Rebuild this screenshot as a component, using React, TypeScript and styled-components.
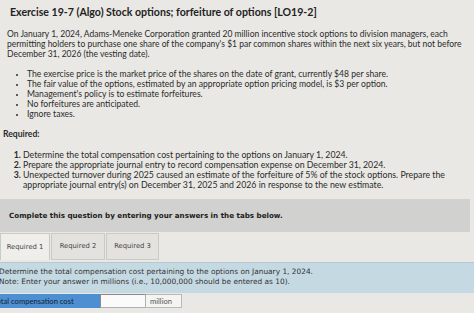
import styled, { createGlobalStyle } from "styled-components";

const GlobalStyle = createGlobalStyle`
  html, body {
    margin: 0;
    padding: 0;
    background: #e9e8e4;
    overflow: hidden;
  }
`;

const Page = styled.div`
  width: 474px;
  height: 313px;
  overflow: hidden;
  font-family: Lato, "Open Sans", sans-serif;
  color: #2b2b2b;
`;

const Article = styled.div`
  padding: 5px 10px 0 7px;
`;

const Title = styled.h1`
  margin: 0 0 0 3px;
  font-size: 10.6px;
  line-height: 14px;
  font-weight: 700;
  color: #222;
`;

const Para = styled.p`
  margin: 10px 0 0;
  font-size: 8.5px;
  line-height: 10px;
  white-space: nowrap;
`;

const Bullets = styled.ul`
  margin: 11px 0 0;
  padding-left: 20px;
  font-size: 8.6px;
  line-height: 9.9px;
  list-style: disc;
  white-space: nowrap;
  li::marker {
    font-size: 7px;
  }
`;

const ReqHead = styled.div`
  margin: 9px 0 0 -4px;
  font-size: 8.6px;
  line-height: 11px;
  font-weight: 700;
`;

const Steps = styled.ol`
  margin: 10px 0 0;
  padding-left: 16px;
  font-size: 8.75px;
  line-height: 10px;
  white-space: nowrap;
  li::marker {
    font-weight: 700;
  }
`;

const Banner = styled.div`
  margin-top: 9px;
  width: 470px;
  height: 33px;
  background: #d1d1cf;
  display: flex;
  align-items: center;
  padding-left: 9px;
  box-sizing: border-box;
  font-family: "DejaVu Sans", Verdana, sans-serif;
  font-weight: 700;
  font-size: 7.15px;
  color: #222;
`;

const TabRow = styled.div`
  display: flex;
  margin-top: 1px;
  height: 27px;
  font-family: "DejaVu Sans", Verdana, sans-serif;
`;

const Tab = styled.div<{ $active?: boolean; $w: number }>`
  width: ${(p) => p.$w}px;
  box-sizing: border-box;
  display: flex;
  align-items: center;
  justify-content: center;
  font-size: 6.8px;
  color: #444;
  background: ${(p) => (p.$active ? "#efeeeb" : "#e3e2df")};
  border: 1px solid #c9c9c6;
  border-bottom: ${(p) => (p.$active ? "none" : "1px solid #c9c9c6")};
  margin-right: 1px;
`;

const InfoBand = styled.div`
  margin-top: 2px;
  height: 31px;
  background: #c5d9e3;
  border-top: 1px solid #b5c9d3;
  box-sizing: border-box;
  padding: 4px 0 0 0;
  font-family: "DejaVu Sans", Verdana, sans-serif;
  font-size: 7.4px;
  line-height: 10px;
  color: #333;
  margin-left: -1px;
  white-space: nowrap;
`;

const AnswerRow = styled.div`
  display: flex;
  height: 14px;
  margin-top: 1px;
  font-family: Lato, "Open Sans", sans-serif;
  font-size: 7.6px;
`;

const Label = styled.div`
  width: 107px;
  margin-left: -7px;
  box-sizing: border-box;
  background: #4d8fd0;
  color: #10243a;
  display: flex;
  align-items: center;
  white-space: nowrap;
`;

const Input = styled.div`
  width: 46px;
  background: #fafafa;
  border: 1px solid #8a8a8a;
  border-right-color: #b0b0ad;
  border-bottom-color: #b0b0ad;
  box-sizing: border-box;
`;

const Unit = styled.div`
  width: 36px;
  background: #f4f4f2;
  border: 1px solid #b9b9b6;
  border-left: none;
  box-sizing: border-box;
  display: flex;
  align-items: center;
  padding-left: 4px;
  color: #555;
`;

export default function App() {
  return (
    <Page>
      <GlobalStyle />
      <Article>
        <Title>Exercise 19-7 (Algo) Stock options; forfeiture of options [LO19-2]</Title>
        <Para>
          On January 1, 2024, Adams-Meneke Corporation granted 20 million incentive stock options to division managers, each
          <br />
          permitting holders to purchase one share of the company's $1 par common shares within the next six years, but not before
          <br />
          December 31, 2026 (the vesting date).
        </Para>
        <Bullets>
          <li>The exercise price is the market price of the shares on the date of grant, currently $48 per share.</li>
          <li>The fair value of the options, estimated by an appropriate option pricing model, is $3 per option.</li>
          <li>Management's policy is to estimate forfeitures.</li>
          <li>No forfeitures are anticipated.</li>
          <li>Ignore taxes.</li>
        </Bullets>
        <ReqHead>Required:</ReqHead>
        <Steps>
          <li>Determine the total compensation cost pertaining to the options on January 1, 2024.</li>
          <li>Prepare the appropriate journal entry to record compensation expense on December 31, 2024.</li>
          <li>
            Unexpected turnover during 2025 caused an estimate of the forfeiture of 5% of the stock options. Prepare the
            <br />
            appropriate journal entry(s) on December 31, 2025 and 2026 in response to the new estimate.
          </li>
        </Steps>
      </Article>
      <Banner>Complete this question by entering your answers in the tabs below.</Banner>
      <TabRow>
        <Tab $active $w={50}>Required 1</Tab>
        <Tab $w={54}>Required 2</Tab>
        <Tab $w={53}>Required 3</Tab>
      </TabRow>
      <InfoBand>
        Determine the total compensation cost pertaining to the options on January 1, 2024.
        <br />
        Note: Enter your answer in millions (i.e., 10,000,000 should be entered as 10).
      </InfoBand>
      <AnswerRow>
        <Label>Total compensation cost</Label>
        <Input />
        <Unit>million</Unit>
      </AnswerRow>
    </Page>
  );
}
